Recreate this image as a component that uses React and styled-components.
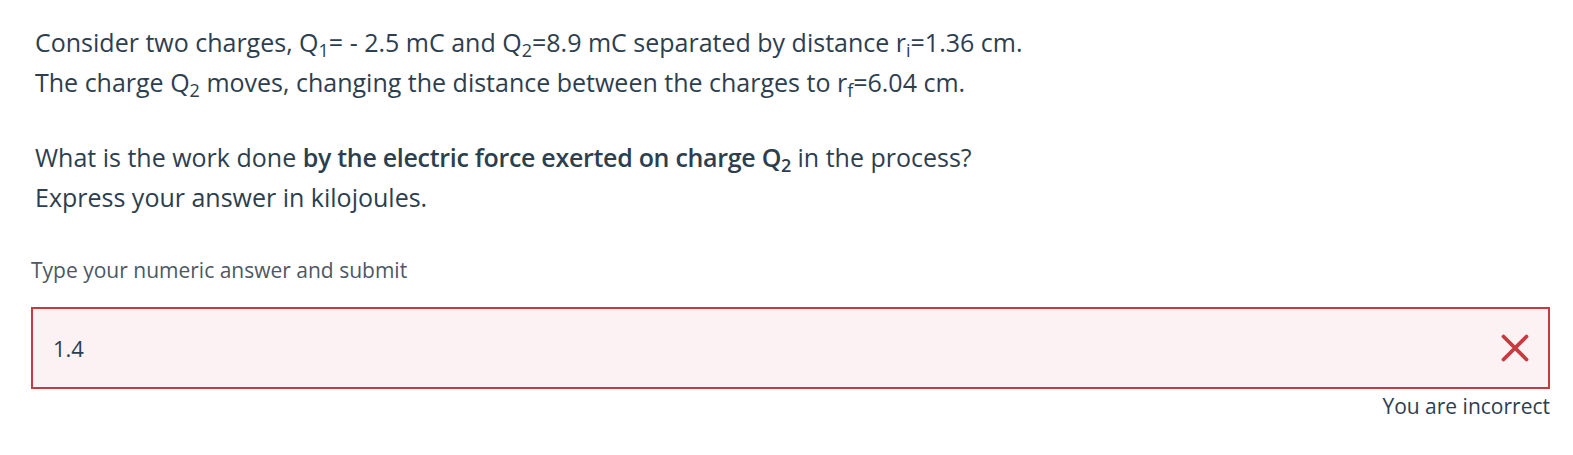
import React from "react";
import styled, { createGlobalStyle } from "styled-components";

const Global = createGlobalStyle`
  html, body { margin: 0; padding: 0; background: #ffffff; }
  body { font-family: "Open Sans", Lato, sans-serif; color: #2d3e4f; }
`;

const Page = styled.div`
  padding: 22px 23px 0 31px;
`;

const Question = styled.div`
  padding-left: 4px;
  font-size: 25px;
  line-height: 40px;
  color: #2d3e4f;
`;

const Para = styled.p`
  margin: 0 0 ${(p) => p.$after || 0}px 0;
`;

const Strong = styled.strong`
  font-weight: 600;
  letter-spacing: -0.3px;
`;

const Sub = styled.sub`
  font-size: 0.72em;
  line-height: 0;
  vertical-align: -0.28em;
`;

const Label = styled.div`
  font-size: 21px;
  line-height: 24px;
  color: #4d5863;
  margin-bottom: 25px;
`;

const AnswerBox = styled.div`
  display: flex;
  align-items: center;
  justify-content: space-between;
  height: 82px;
  box-sizing: border-box;
  border: 2px solid #c63b3f;
  background: #fcf1f3;
  padding: 0 19px 0 20px;
`;

const Value = styled.span`
  font-size: 22px;
  color: #2d3e4f;
`;

const Feedback = styled.div`
  text-align: right;
  font-size: 21px;
  line-height: 24px;
  margin-top: 5px;
  color: #2d3e4f;
`;

export default function App() {
  return (
    <>
      <Global />
      <Page>
        <Question>
          <Para $after={35}>
            Consider two charges, Q<Sub>1</Sub>= - 2.5 mC and Q<Sub>2</Sub>=8.9 mC separated by distance r<Sub>i</Sub>=1.36 cm.
            <br />
            The charge Q<Sub>2</Sub> moves, changing the distance between the charges to r<Sub>f</Sub>=6.04 cm.
          </Para>
          <Para $after={41}>
            What is the work done <Strong>by the electric force exerted on charge Q<Sub>2</Sub></Strong> in the process?
            <br />
            Express your answer in kilojoules.
          </Para>
        </Question>
        <Label>Type your numeric answer and submit</Label>
        <AnswerBox>
          <Value>1.4</Value>
          <svg width="28" height="28" viewBox="0 0 28 28">
            <path d="M2.5 2.5 L25.5 25.5 M25.5 2.5 L2.5 25.5" stroke="#c63b3f" strokeWidth="3.8" strokeLinecap="round" />
          </svg>
        </AnswerBox>
        <Feedback>You are incorrect</Feedback>
      </Page>
    </>
  );
}
